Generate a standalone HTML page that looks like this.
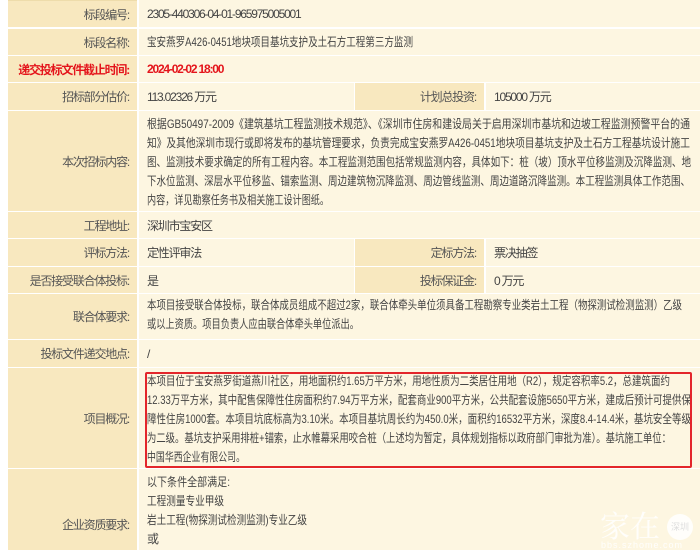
<!DOCTYPE html>
<html><head><meta charset="utf-8"><style>
body{margin:0;width:700px;height:550px;overflow:hidden;background:#fff;font-family:"Liberation Sans","Noto Sans CJK SC",sans-serif;font-size:12px;letter-spacing:-1.2px;color:#444;position:relative}
.c{position:absolute;box-sizing:border-box;white-space:nowrap;overflow:hidden}
.l{background:#f8e8bf;padding-right:8px;color:#555;display:flex;align-items:center;justify-content:flex-end}
.v{background:#fdf6e1;padding-left:8px;display:flex;align-items:center;color:#444}
.m{line-height:19px;display:block;padding-top:3px}
svg{position:absolute;left:0;top:0}
svg text{font-family:"Liberation Sans","Noto Sans CJK SC",sans-serif;font-size:12px;fill:#444;letter-spacing:0}
.red{color:#e4141b;font-weight:bold}
</style></head><body>
<div class="c l" style="left:8px;top:0;width:129px;height:27px;border-top:1px solid #eedcab">标段编号:</div>
<div class="c v" style="left:139px;top:0;width:561px;height:27px">2305-440306-04-01-965975005001</div>
<div class="c l" style="left:8px;top:29px;width:129px;height:26px">标段名称:</div>
<div class="c v" style="left:139px;top:29px;width:561px;height:26px"><svg width="561" height="26"><text x="8" y="17" textLength="266" lengthAdjust="spacingAndGlyphs">宝安燕罗A426-0451地块项目基坑支护及土石方工程第三方监测</text></svg></div>
<div class="c l red" style="left:8px;top:56px;width:129px;height:26px">递交投标文件截止时间:</div>
<div class="c v red" style="left:139px;top:56px;width:561px;height:26px">2024-02-02 18:00</div>
<div class="c l" style="left:8px;top:83px;width:129px;height:27px">招标部分估价:</div>
<div class="c v" style="left:139px;top:83px;width:215px;height:27px">113.02326 万元</div>
<div class="c l" style="left:355px;top:83px;width:129px;height:27px">计划总投资:</div>
<div class="c v" style="left:486px;top:83px;width:214px;height:27px">105000 万元</div>
<div class="c l" style="left:8px;top:111px;width:129px;height:100px">本次招标内容:</div>
<div class="c v" style="left:139px;top:111px;width:561px;height:100px"><svg width="561" height="100">
<text x="8" y="17" textLength="543" lengthAdjust="spacingAndGlyphs">根据GB50497-2009《建筑基坑工程监测技术规范》、《深圳市住房和建设局关于启用深圳市基坑和边坡工程监测预警平台的通</text>
<text x="8" y="36" textLength="543" lengthAdjust="spacingAndGlyphs">知》及其他深圳市现行或即将发布的基坑管理要求，负责完成宝安燕罗A426-0451地块项目基坑支护及土石方工程基坑设计施工</text>
<text x="8" y="55" textLength="544" lengthAdjust="spacingAndGlyphs">图、监测技术要求确定的所有工程内容。本工程监测范围包括常规监测内容，具体如下：桩（坡）顶水平位移监测及沉降监测、地</text>
<text x="8" y="74" textLength="543" lengthAdjust="spacingAndGlyphs">下水位监测、深层水平位移监、锚索监测、周边建筑物沉降监测、周边管线监测、周边道路沉降监测。本工程监测具体工作范围、</text>
<text x="8" y="93" textLength="182" lengthAdjust="spacingAndGlyphs">内容，详见勘察任务书及相关施工设计图纸。</text></svg></div>
<div class="c l" style="left:8px;top:212px;width:129px;height:26px">工程地址:</div>
<div class="c v" style="left:139px;top:212px;width:561px;height:26px">深圳市宝安区</div>
<div class="c l" style="left:8px;top:239px;width:129px;height:27px">评标方法:</div>
<div class="c v" style="left:139px;top:239px;width:215px;height:27px">定性评审法</div>
<div class="c l" style="left:355px;top:239px;width:129px;height:27px">定标方法:</div>
<div class="c v" style="left:486px;top:239px;width:214px;height:27px">票决抽签</div>
<div class="c l" style="left:8px;top:267px;width:129px;height:26px">是否接受联合体投标:</div>
<div class="c v" style="left:139px;top:267px;width:215px;height:26px">是</div>
<div class="c l" style="left:355px;top:267px;width:129px;height:26px">投标保证金:</div>
<div class="c v" style="left:486px;top:267px;width:214px;height:26px">0 万元</div>
<div class="c l" style="left:8px;top:294px;width:129px;height:45px">联合体要求:</div>
<div class="c v" style="left:139px;top:294px;width:561px;height:45px"><svg width="561" height="45">
<text x="8" y="15" textLength="535" lengthAdjust="spacingAndGlyphs">本项目接受联合体投标，联合体成员组成不超过2家，联合体牵头单位须具备工程勘察专业类岩土工程（物探测试检测监测）乙级</text>
<text x="8" y="34" textLength="212" lengthAdjust="spacingAndGlyphs">或以上资质。项目负责人应由联合体牵头单位派出。</text></svg></div>
<div class="c l" style="left:8px;top:340px;width:129px;height:27px">投标文件递交地点:</div>
<div class="c v" style="left:139px;top:340px;width:561px;height:27px">/</div>
<div class="c l" style="left:8px;top:368px;width:129px;height:100px">项目概况:</div>
<div class="c v" style="left:139px;top:368px;width:561px;height:100px"><svg width="561" height="100">
<text x="8" y="17" textLength="523" lengthAdjust="spacingAndGlyphs">本项目位于宝安燕罗街道燕川社区，用地面积约1.65万平方米，用地性质为二类居住用地（R2），规定容积率5.2，总建筑面约</text>
<text x="8" y="36" textLength="544" lengthAdjust="spacingAndGlyphs">12.33万平方米，其中配售保障性住房面积约7.94万平方米，配套商业900平方米，公共配套设施5650平方米，建成后预计可提供保</text>
<text x="8" y="55" textLength="544" lengthAdjust="spacingAndGlyphs">障性住房1000套。本项目坑底标高为3.10米。本项目基坑周长约为450.0米，面积约16532平方米，深度8.4-14.4米，基坑安全等级</text>
<text x="8" y="74" textLength="524" lengthAdjust="spacingAndGlyphs">为二级。基坑支护采用排桩+锚索，止水帷幕采用咬合桩（上述均为暂定，具体规划指标以政府部门审批为准）。基坑施工单位：</text>
<text x="8" y="93" textLength="98" lengthAdjust="spacingAndGlyphs">中国华西企业有限公司。</text></svg></div>
<div class="c" style="left:145px;top:372px;width:547px;height:96px;border:2px solid #e3262b;border-radius:2px"></div>
<div class="c l" style="left:8px;top:469px;width:129px;height:81px;align-items:flex-start;padding-top:47px">企业资质要求:</div>
<div class="c v" style="left:139px;top:469px;width:561px;height:81px"><svg width="561" height="81">
<text x="8" y="17" textLength="83" lengthAdjust="spacingAndGlyphs">以下条件全部满足:</text>
<text x="8" y="36" textLength="77" lengthAdjust="spacingAndGlyphs">工程测量专业甲级</text>
<text x="8" y="55" textLength="160" lengthAdjust="spacingAndGlyphs">岩土工程(物探测试检测监测)专业乙级</text>
<text x="8" y="74">或</text></svg></div>
<div class="c" style="left:600px;top:502px;color:rgba(255,255,255,.85);font-size:30px;letter-spacing:0;font-family:'Noto Serif CJK SC',serif">家在</div>
<div class="c" style="left:667px;top:514px;width:26px;height:26px;border-radius:50%;background:rgba(255,255,255,.85);color:#ddd;font-size:9px;letter-spacing:0;text-align:center;line-height:26px">深圳</div>
<div class="c" style="left:601px;top:540px;color:rgba(255,255,255,.9);font-size:9px;letter-spacing:1px">bbs.szhome.com</div>
</body></html>
